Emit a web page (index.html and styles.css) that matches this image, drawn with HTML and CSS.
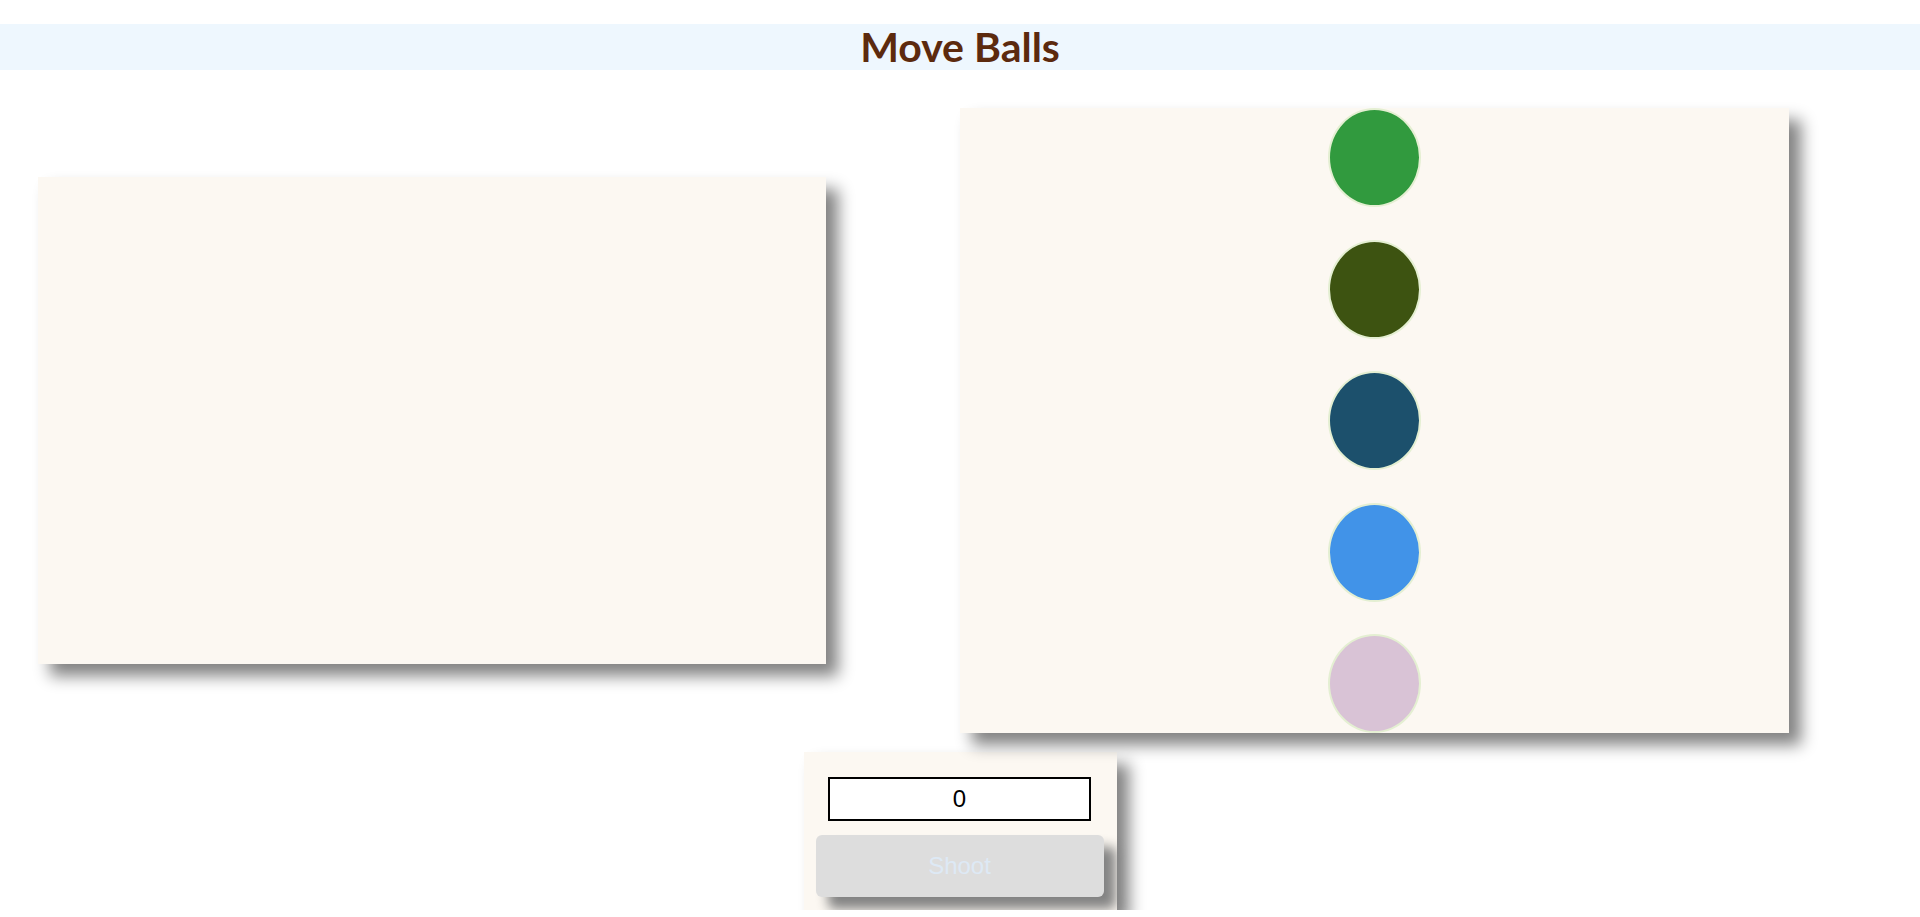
FILE: index.html
```html
<!DOCTYPE html>
<html>
<head>
<meta charset="utf-8">
<title>Move Balls</title>
<link rel="stylesheet" href="styles.css">
</head>
<body>
<h1 class="title">Move Balls</h1>
<div class="stage">
  <div class="board board-left"></div>
  <div class="board board-right">
    <div class="ball ball-green"></div>
    <div class="ball ball-olive"></div>
    <div class="ball ball-teal"></div>
    <div class="ball ball-blue"></div>
    <div class="ball ball-lilac"></div>
  </div>
</div>
<div class="controls">
  <input class="count" type="text" value="0">
  <button class="shoot" disabled>Shoot</button>
</div>
</body>
</html>
```
FILE: styles.css
```css
html, body {
  margin: 0;
  padding: 0;
  background: #ffffff;
  overflow: hidden;
}
body {
  font-family: "Liberation Sans", Arial, sans-serif;
}
.title {
  margin: 24px 0 0 0;
  height: 46px;
  line-height: 46px;
  background: #eef7fe;
  color: #5c2a0e;
  text-align: center;
  font-family: Lato, "Noto Sans", sans-serif;
  font-weight: 700;
  font-size: 41px;
}
.stage {
  display: flex;
  align-items: center;
  margin-top: 38px;
  padding-left: 38px;
  gap: 134px;
}
.board {
  background: #fcf8f2;
  box-shadow: 12px 12px 15px #838383;
}
.board-left {
  width: 788px;
  height: 487px;
}
.board-right {
  width: 829px;
  height: 625px;
  display: flex;
  flex-direction: column;
  align-items: center;
  justify-content: space-between;
}
.ball {
  width: 89px;
  height: 95px;
  border: 2px solid #e4efd2;
  border-radius: 50%;
  flex: none;
}
.ball-green { background: #319a3e; }
.ball-olive { background: #3d5311; }
.ball-teal { background: #1c506c; }
.ball-blue { background: #4193e8; }
.ball-lilac { background: #d9c3d6; }
.controls {
  width: 313px;
  height: 158px;
  box-sizing: border-box;
  margin: 19px auto 0 auto;
  background: #fcf8f2;
  box-shadow: 12px 12px 15px #838383;
  padding: 25px 13px 0 12px;
  display: flex;
  flex-direction: column;
  align-items: center;
}
.count {
  width: 263px;
  height: 44px;
  box-sizing: border-box;
  border: 2px solid #000000;
  background: #ffffff;
  text-align: center;
  font-family: "Liberation Sans", Arial, sans-serif;
  font-size: 24px;
  color: #000000;
  padding: 0;
  margin: 0;
}
.shoot {
  margin-top: 14px;
  width: 288px;
  height: 62px;
  border: none;
  border-radius: 6px;
  background: #dddddd;
  color: #dde9f5;
  font-family: "Liberation Sans", Arial, sans-serif;
  font-size: 24px;
  box-shadow: 12px 12px 12px #838383;
  padding: 0;
}
```
